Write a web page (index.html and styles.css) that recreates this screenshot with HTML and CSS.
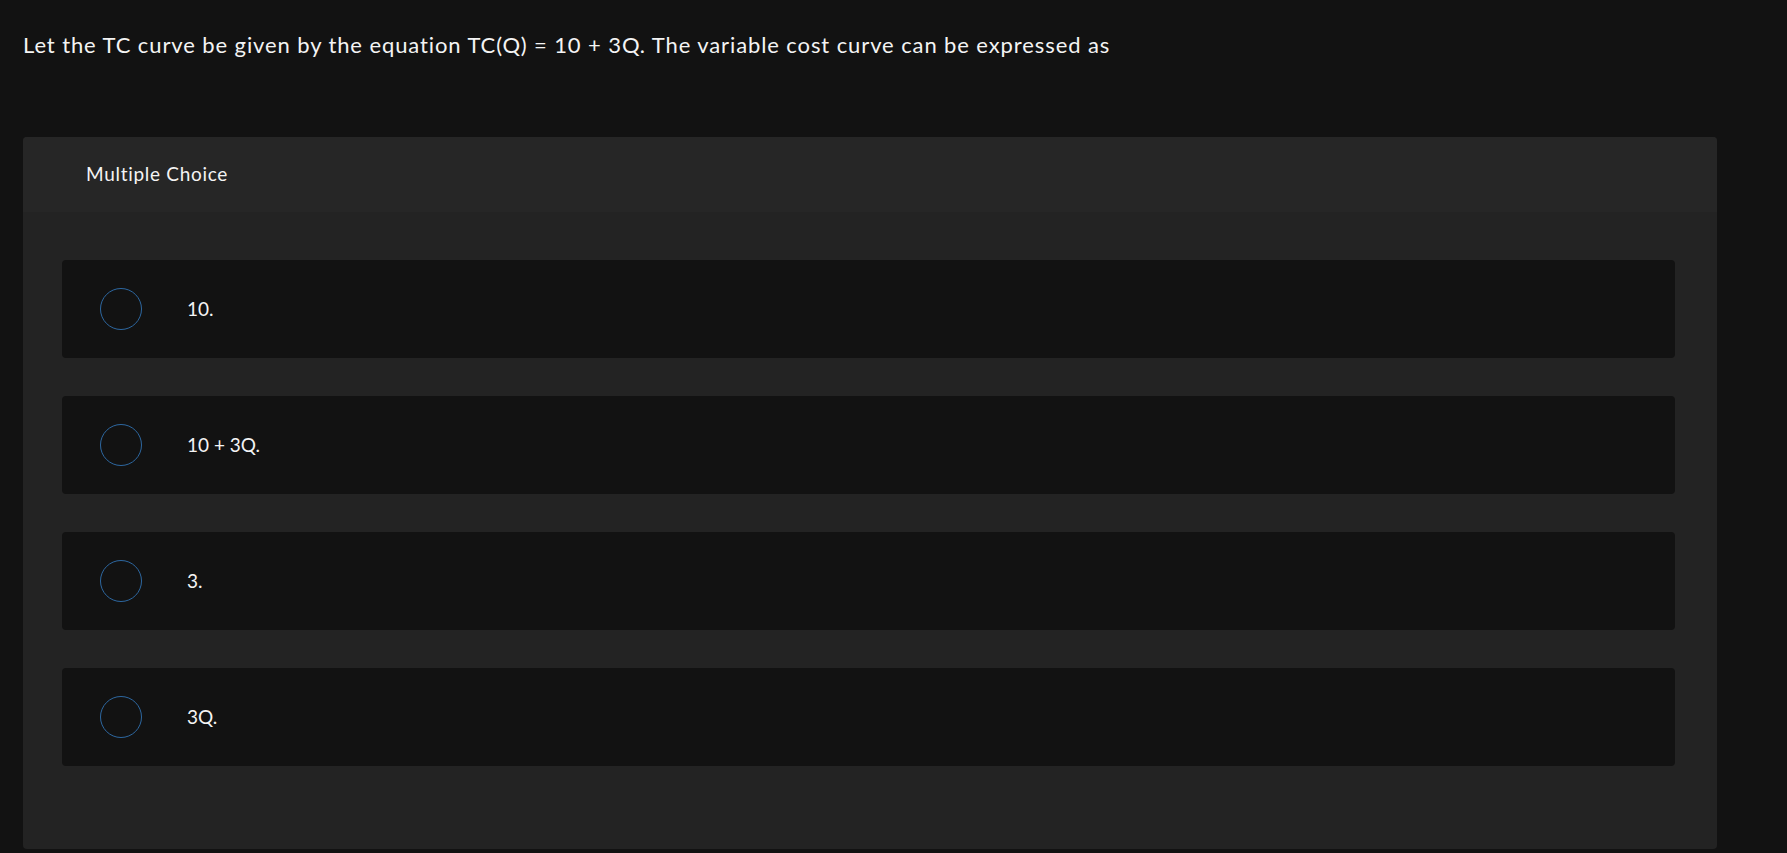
FILE: index.html
```html
<!DOCTYPE html>
<html>
<head>
<meta charset="utf-8">
<link rel="stylesheet" href="styles.css">
</head>
<body>
<main class="page">
  <p class="prompt">Let the TC curve be given by the equation TC(Q) = 10 + 3Q. The variable cost curve can be expressed as</p>
  <section class="card">
    <header class="card-head">Multiple Choice</header>
    <div class="options">
      <label class="option"><span class="radio"></span><span class="opt-text">10.</span></label>
      <label class="option"><span class="radio"></span><span class="opt-text">10 + 3Q.</span></label>
      <label class="option"><span class="radio"></span><span class="opt-text">3.</span></label>
      <label class="option"><span class="radio"></span><span class="opt-text">3Q.</span></label>
    </div>
  </section>
</main>
</body>
</html>
```

FILE: styles.css
```css
html, body {
  margin: 0;
  padding: 0;
  background: #121212;
  height: 100%;
  overflow: hidden;
}
.page {
  font-family: Lato, "Open Sans", sans-serif;
  color: #f4f4f4;
  padding: 0 70px 0 23px;
}
.prompt {
  margin: 0;
  padding-top: 31px;
  font-size: 22px;
  line-height: 28px;
  letter-spacing: 0.9px;
  height: 106px;
  box-sizing: border-box;
}
.card {
  margin-top: 31px;
  background: #232323;
  border-radius: 4px;
  height: 712px;
  box-sizing: border-box;
  overflow: hidden;
}
.card-head {
  background: #262626;
  height: 75px;
  box-sizing: border-box;
  padding: 24px 0 0 63px;
  font-size: 19px;
  line-height: 26px;
  letter-spacing: 0.7px;
}
.options {
  display: flex;
  flex-direction: column;
  gap: 38px;
  padding: 48px 42px 0 39px;
}
.option {
  display: flex;
  align-items: center;
  height: 98px;
  background: #121212;
  border-radius: 4px;
  padding-left: 38px;
  box-sizing: border-box;
}
.radio {
  width: 42px;
  height: 42px;
  box-sizing: border-box;
  border: 1px solid #2d67a0;
  border-radius: 50%;
  flex: none;
}
.opt-text {
  margin-left: 45px;
  font-size: 19px;
  line-height: 24px;
}
```
